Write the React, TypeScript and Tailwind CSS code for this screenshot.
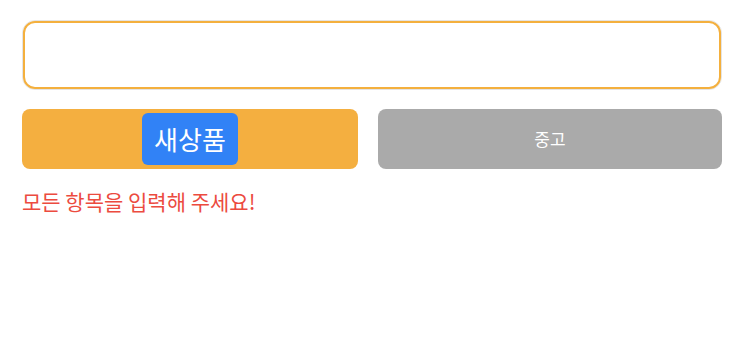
export default function App() {
  return (
    <div
      className="w-[746px] h-[364px] bg-white pt-[20px]"
      style={{ fontFamily: '"Noto Sans CJK KR", "Noto Sans", sans-serif' }}
    >
      <div className="ml-[22px] w-[700px]">
        <div className="h-[70px] rounded-[13px] border border-[#e4e4e4]">
          <input
            className="w-full h-full rounded-[12px] border-2 border-[#f4b03e] outline-none px-3 bg-white"
            type="text"
          />
        </div>
        <div className="mt-[19px] flex gap-[20px]">
          <button className="flex-1 h-[60px] rounded-[8px] bg-[#f4af40] flex items-center justify-center">
            <span className="bg-[#3182f6] text-white text-[26px] leading-[52px] h-[52px] px-[12px] rounded-[6px]">
              새상품
            </span>
          </button>
          <button className="w-[344px] h-[60px] rounded-[8px] bg-[#aaaaaa] text-white text-[17px] flex items-center justify-center">
            중고
          </button>
        </div>
        <p className="mt-[18px] text-[#ec4b3f] text-[21px] leading-[28px]">모든 항목을 입력해 주세요!</p>
      </div>
    </div>
  );
}
